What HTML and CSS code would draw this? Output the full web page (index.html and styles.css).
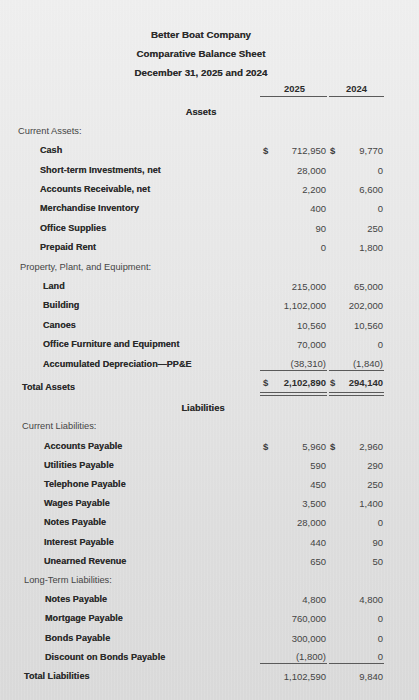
FILE: index.html
```html
<!DOCTYPE html>
<html lang="en">
<head>
<meta charset="utf-8">
<title>Better Boat Company – Comparative Balance Sheet</title>
<link rel="stylesheet" href="styles.css">
</head>
<body>
<main class="sheet">
  <header class="title">
    <div class="title-line">Better Boat Company</div>
    <div class="title-line">Comparative Balance Sheet</div>
    <div class="title-line">December 31, 2025 and 2024</div>
  </header>

  <div class="row years">
    <span></span>
    <span class="amt a1 ul yr">2025</span>
    <span class="amt a2 ul yr">2024</span>
  </div>

  <section class="block assets">
    <div class="row section-title">Assets</div>
    <div class="row"><span class="lbl head">Current Assets:</span></div>
    <div class="row"><span class="lbl item">Cash</span><span class="amt a1"><i>$</i><em>712,950</em></span><span class="amt a2"><i>$</i><em>9,770</em></span></div>
    <div class="row"><span class="lbl item">Short-term Investments, net</span><span class="amt a1"><em>28,000</em></span><span class="amt a2"><em>0</em></span></div>
    <div class="row"><span class="lbl item">Accounts Receivable, net</span><span class="amt a1"><em>2,200</em></span><span class="amt a2"><em>6,600</em></span></div>
    <div class="row"><span class="lbl item">Merchandise Inventory</span><span class="amt a1"><em>400</em></span><span class="amt a2"><em>0</em></span></div>
    <div class="row"><span class="lbl item">Office Supplies</span><span class="amt a1"><em>90</em></span><span class="amt a2"><em>250</em></span></div>
    <div class="row"><span class="lbl item">Prepaid Rent</span><span class="amt a1"><em>0</em></span><span class="amt a2"><em>1,800</em></span></div>
    <div class="row"><span class="lbl head head2">Property, Plant, and Equipment:</span></div>
    <div class="row"><span class="lbl item item2">Land</span><span class="amt a1"><em>215,000</em></span><span class="amt a2"><em>65,000</em></span></div>
    <div class="row"><span class="lbl item item2">Building</span><span class="amt a1"><em>1,102,000</em></span><span class="amt a2"><em>202,000</em></span></div>
    <div class="row"><span class="lbl item item2">Canoes</span><span class="amt a1"><em>10,560</em></span><span class="amt a2"><em>10,560</em></span></div>
    <div class="row"><span class="lbl item item2">Office Furniture and Equipment</span><span class="amt a1"><em>70,000</em></span><span class="amt a2"><em>0</em></span></div>
    <div class="row"><span class="lbl item item2">Accumulated Depreciation—PP&amp;E</span><span class="amt a1 ul"><em>(38,310)</em></span><span class="amt a2 ul"><em>(1,840)</em></span></div>
    <div class="row total">
      <span class="lbl tot">Total Assets</span>
      <span class="amt a1 dbl bold"><i>$</i><em>2,102,890</em></span>
      <span class="amt a2 dbl bold"><i>$</i><em>294,140</em></span>
    </div>
  </section>

  <section class="block liabilities">
    <div class="row section-title">Liabilities</div>
    <div class="row"><span class="lbl head">Current Liabilities:</span></div>
    <div class="row"><span class="lbl item">Accounts Payable</span><span class="amt a1"><i>$</i><em>5,960</em></span><span class="amt a2"><i>$</i><em>2,960</em></span></div>
    <div class="row"><span class="lbl item">Utilities Payable</span><span class="amt a1"><em>590</em></span><span class="amt a2"><em>290</em></span></div>
    <div class="row"><span class="lbl item">Telephone Payable</span><span class="amt a1"><em>450</em></span><span class="amt a2"><em>250</em></span></div>
    <div class="row"><span class="lbl item">Wages Payable</span><span class="amt a1"><em>3,500</em></span><span class="amt a2"><em>1,400</em></span></div>
    <div class="row"><span class="lbl item">Notes Payable</span><span class="amt a1"><em>28,000</em></span><span class="amt a2"><em>0</em></span></div>
    <div class="row"><span class="lbl item">Interest Payable</span><span class="amt a1"><em>440</em></span><span class="amt a2"><em>90</em></span></div>
    <div class="row"><span class="lbl item">Unearned Revenue</span><span class="amt a1"><em>650</em></span><span class="amt a2"><em>50</em></span></div>
    <div class="row"><span class="lbl head head2">Long-Term Liabilities:</span></div>
    <div class="row"><span class="lbl item item2">Notes Payable</span><span class="amt a1"><em>4,800</em></span><span class="amt a2"><em>4,800</em></span></div>
    <div class="row"><span class="lbl item item2">Mortgage Payable</span><span class="amt a1"><em>760,000</em></span><span class="amt a2"><em>0</em></span></div>
    <div class="row"><span class="lbl item item2">Bonds Payable</span><span class="amt a1"><em>300,000</em></span><span class="amt a2"><em>0</em></span></div>
    <div class="row"><span class="lbl item item2">Discount on Bonds Payable</span><span class="amt a1 ul"><em>(1,800)</em></span><span class="amt a2 ul"><em>0</em></span></div>
    <div class="row"><span class="lbl tot tot2">Total Liabilities</span><span class="amt a1"><em>1,102,590</em></span><span class="amt a2"><em>9,840</em></span></div>
  </section>
</main>
</body>
</html>
```

FILE: styles.css
```css
html, body {
  margin: 0;
  padding: 0;
}

body {
  width: 419px;
  height: 700px;
  overflow: hidden;
  font-family: "Liberation Sans", Arial, sans-serif;
  color: #333;
  background-color: #e4e4e4;
  background-image:
    repeating-linear-gradient(90deg, rgba(255,255,255,0.10) 0 1px, rgba(0,0,0,0) 1px 3px),
    linear-gradient(180deg, #eeeeee 0%, #e6e6e6 40%, #dddddd 75%, #d9d9d9 100%);
}

.sheet {
  width: 366px;
  margin-left: 18px;
  padding-top: 24.5px;
}

.title {
  text-align: center;
  font-weight: bold;
  font-size: 9.8px;
  color: #2a2a2a;
  text-shadow: 0 0 0.4px rgba(40,40,40,0.6);
}

.title-line {
  line-height: 19px;
  height: 19px;
}

.row {
  display: grid;
  grid-template-columns: 242px 67px 57px;
  align-items: center;
  height: 19.4px;
}

.liabilities .row {
  height: 19.2px;
}

.years {
  height: 15px;
  margin-top: 0.5px;
  align-items: start;
}

.section-title {
  display: block;
  text-align: center;
  font-weight: bold;
  font-size: 9.4px;
  line-height: 19.4px;
  color: #2a2a2a;
  text-shadow: 0 0 0.4px rgba(40,40,40,0.6);
}

.assets .section-title {
  margin-top: 5.3px;
}

.liabilities .section-title {
  padding-left: 4px;
  line-height: 19.2px;
}

.lbl {
  white-space: nowrap;
  line-height: 13px;
}

.head {
  font-size: 9.3px;
  color: #454545;
  padding-left: 0;
}

.head2 {
  padding-left: 2px;
}

.item {
  font-weight: bold;
  font-size: 9.1px;
  color: #2a2a2a;
  padding-left: 22px;
  text-shadow: 0 0 0.4px rgba(40,40,40,0.6);
}

.item2 {
  padding-left: 25px;
}

.tot {
  font-weight: bold;
  font-size: 9.1px;
  color: #2a2a2a;
  padding-left: 4px;
  text-shadow: 0 0 0.4px rgba(40,40,40,0.6);
}

.liabilities .head { padding-left: 4px; }
.liabilities .head2 { padding-left: 6px; }
.liabilities .item { padding-left: 26px; }
.liabilities .item2 { padding-left: 27px; }
.tot2 { padding-left: 6px; }

.amt {
  display: flex;
  justify-content: space-between;
  align-items: baseline;
  line-height: 13px;
  font-size: 9.5px;
  color: #444;
  white-space: nowrap;
}

.amt i,
.amt em {
  font-style: normal;
}

.amt i {
  font-weight: bold;
  color: #3a3a3a;
}

.amt em {
  margin-left: auto;
}

.a1 {
  padding: 0 1px 0 3px;
}

.a2 {
  margin-left: 2px;
  padding: 0 1px 0 1px;
}

.yr {
  justify-content: center;
  font-weight: bold;
  color: #2a2a2a;
  font-size: 9.4px;
  line-height: 14px;
}

.ul {
  border-bottom: 1px solid #5a5a5a;
}

.bold {
  font-weight: bold;
  color: #2e2e2e;
}

.total {
  height: 24.4px;
  align-items: start;
}

.total .lbl {
  margin-top: 7.5px;
}

.total .amt {
  margin-top: 2.6px;
}

.dbl {
  padding-bottom: 2.5px;
  border-bottom: 4px double #5a5a5a;
}
```
